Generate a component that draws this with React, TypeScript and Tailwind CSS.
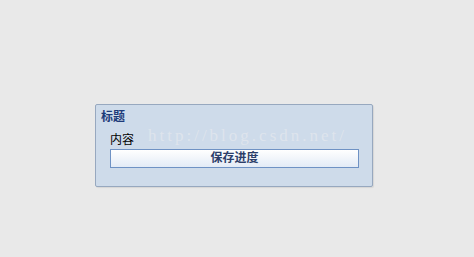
export default function App() {
  return (
    <div className="relative h-[257px] w-[474px] overflow-hidden bg-[#e9e9e9] pl-[95px] pt-[104px] font-['Liberation_Sans','Noto_Sans_CJK_SC',sans-serif]">
      <div className="flex h-[83px] w-[278px] flex-col rounded-[2px] border border-[#97a8bf] bg-[#cedbea] shadow-[1px_1px_1px_rgba(0,0,0,0.08)]">
        <div className="pl-[5px] pt-[4px] text-[12px] font-bold leading-[16px] text-[#1d3b7a]">标题</div>
        <div className="mt-[6px] flex flex-col pl-[14px]">
          <div className="text-[12px] leading-[18px] text-black">内容</div>
          <button
            type="button"
            className="mt-[0px] h-[19px] w-[249px] border border-[#6f92c4] bg-gradient-to-b from-[#ffffff] to-[#e3ebf6] text-[12px] font-bold leading-[17px] text-[#2d3f6a]"
          >
            保存进度
          </button>
        </div>
      </div>
      <div className="pointer-events-none absolute left-[148px] top-[126px] font-['Liberation_Serif',serif] text-[17px] leading-[20px] tracking-[3px] text-[#e2e7ee] opacity-80">
        http://blog.csdn.net/
      </div>
    </div>
  );
}
